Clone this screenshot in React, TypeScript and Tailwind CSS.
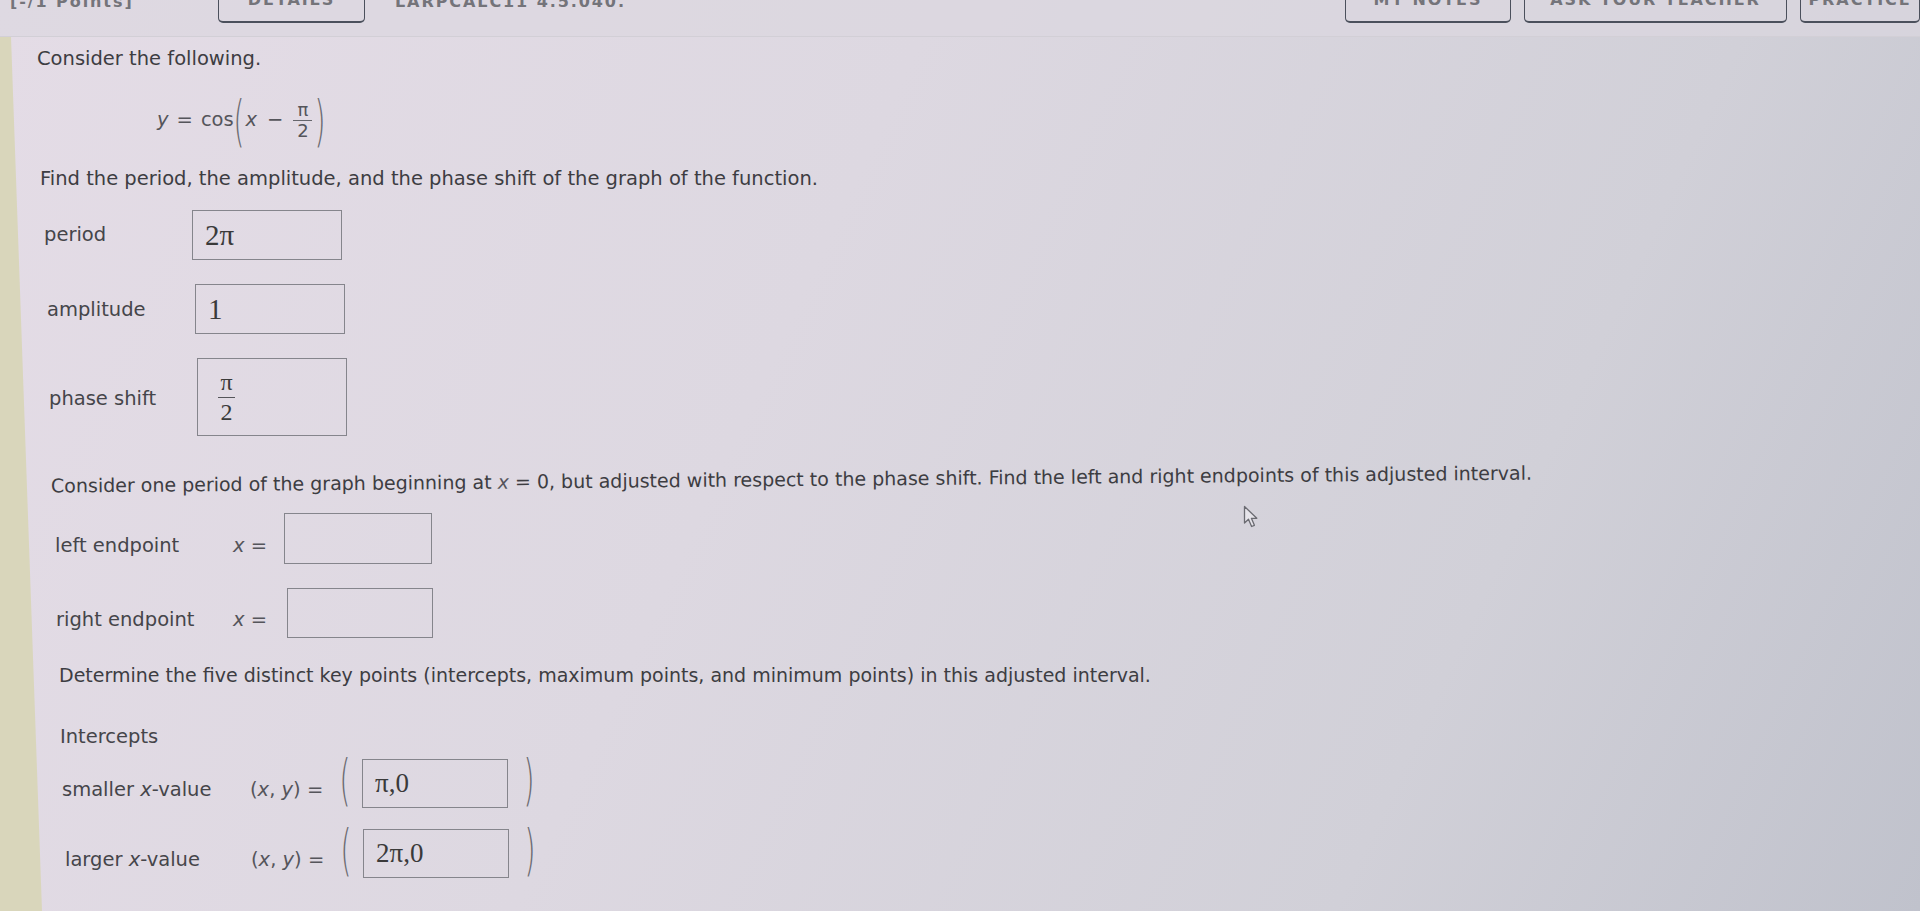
import React from 'react';

const sans = "font-['DejaVu_Sans','Verdana',sans-serif]";
const serif = "font-['Liberation_Serif','Times_New_Roman',serif]";

const AnswerBox: React.FC<{ w?: string; h?: string; children?: React.ReactNode }> = ({ w = 'w-[150px]', h = 'h-[50px]', children }) => (
  <div className={`${w} ${h} shrink-0 border border-[#85858c] flex items-center pl-[12px] text-[#3a3a3a] ${serif}`}>{children}</div>
);

const Paren: React.FC<{ side: 'l' | 'r'; cls?: string }> = ({ side, cls = '' }) => (
  <span className={`text-[56px] leading-none font-extralight text-[#6a6a70] scale-x-[0.5] inline-block -mt-[6px] ${sans} ${cls}`}>{side === 'l' ? '(' : ')'}</span>
);

const TopTab: React.FC<{ w: string; label: string }> = ({ w, label }) => (
  <div className={`${w} h-[44px] -mt-[21px] shrink-0 rounded-b-[5px] border-x-[1.5px] border-b-[2px] border-[#4b505c] flex items-center justify-center text-[16px] font-bold tracking-[0.12em] text-[#74747a]`}>
    {label}
  </div>
);

export default function App() {
  return (
    <div className={`w-[1920px] h-[911px] overflow-hidden ${sans} bg-[linear-gradient(115deg,#e4dce6_0%,#ddd8e1_40%,#d1d0d8_75%,#c0c2cc_100%)]`}>
      {/* header strip */}
      <div className="h-[37px] flex items-start overflow-hidden bg-[#dcd7df]/70 border-b border-[#d2cfd6]">
        <div className="w-[218px] shrink-0 pl-[10px] -mt-[10px] text-[16px] font-bold tracking-[0.12em] text-[#74747a]">[-/1 Points]</div>
        <TopTab w="w-[147px]" label="DETAILS" />
        <div className="ml-[30px] -mt-[10px] text-[16px] font-bold tracking-[0.12em] text-[#74747a]">LARPCALC11 4.5.040.</div>
        <div className="ml-auto flex gap-[13px]">
          <TopTab w="w-[166px]" label="MY NOTES" />
          <TopTab w="w-[263px]" label="ASK YOUR TEACHER" />
          <TopTab w="w-[120px]" label="PRACTICE" />
        </div>
      </div>

      {/* question body */}
      <div className="relative h-[874px]">
        <div className="absolute left-0 top-0 h-full w-[44px] bg-[#d9d6bb] [clip-path:polygon(0_0,11px_0,42px_100%,0_100%)]" />

        <div className="relative flex flex-col text-[19.5px] leading-[20px] text-[#3d3d42]">
          <div className="mt-[12px] pl-[37px]">Consider the following.</div>

          <div className="mt-[28px] pl-[157px] h-[46px] flex items-center text-[#55555b]">
            <span className="italic">y</span>
            <span className="mx-[8px]">=</span>
            <span>cos</span>
            <Paren side="l" cls="-ml-[6px] -mr-[4px] text-[50px] mt-[2px]" />
            <span className="italic">x</span>
            <span className="mx-[10px]">−</span>
            <span className={`inline-flex flex-col items-center text-[18px] leading-[20px] ${sans}`}>
              <span>π</span>
              <span className="w-[19px] border-t border-[#66666c]" />
              <span>2</span>
            </span>
            <Paren side="r" cls="-ml-[3px] text-[50px] mt-[2px]" />
          </div>

          <div className="mt-[26px] pl-[40px]">Find the period, the amplitude, and the phase shift of the graph of the function.</div>

          <div className="mt-[21px] pl-[44px] flex items-center">
            <span className="w-[148px] text-[#45454a]">period</span>
            <AnswerBox><span className="text-[29px]">2π</span></AnswerBox>
          </div>

          <div className="mt-[24px] pl-[47px] flex items-center">
            <span className="w-[148px] text-[#45454a] mt-[2px]">amplitude</span>
            <AnswerBox><span className="text-[29px]">1</span></AnswerBox>
          </div>

          <div className="mt-[24px] pl-[49px] flex items-center">
            <span className="w-[148px] text-[#45454a] mt-[4px]">phase shift</span>
            <AnswerBox h="h-[78px]">
              <span className="ml-[8px] inline-flex flex-col items-center text-[24px] leading-[25px]">
                <span>π</span>
                <span className="w-[17px] border-t border-[#55555a] my-[2px]" />
                <span>2</span>
              </span>
            </AnswerBox>
          </div>

          <div className="mt-[40px] pl-[51px] text-[19px] -rotate-[0.5deg] origin-left">
            Consider one period of the graph beginning at <span className="italic text-[#55555b]">x</span> = 0, but adjusted with respect to the phase shift. Find the left and right endpoints of this adjusted interval.
          </div>

          <div className="mt-[17px] pl-[55px] flex items-center">
            <span className="w-[178px] text-[#45454a] mt-[14px]">left endpoint</span>
            <span className="w-[51px] text-[#55555b] mt-[14px]"><span className="italic">x</span> =</span>
            <AnswerBox w="w-[148px]" h="h-[51px]" />
          </div>

          <div className="mt-[24px] pl-[56px] flex items-center">
            <span className="w-[177px] text-[#45454a] mt-[14px]">right endpoint</span>
            <span className="w-[54px] text-[#55555b] mt-[14px]"><span className="italic">x</span> =</span>
            <AnswerBox w="w-[146px]" />
          </div>

          <div className="mt-[27px] pl-[59px] text-[19px]">
            Determine the five distinct key points (intercepts, maximum points, and minimum points) in this adjusted interval.
          </div>

          <div className="mt-[42px] pl-[60px] text-[#45454a]">Intercepts</div>

          <div className="mt-[11px] pl-[62px] flex items-center">
            <span className="w-[188px] text-[#45454a] mt-[14px]">smaller <span className="italic">x</span>-value</span>
            <span className="w-[90px] text-[#55555b] mt-[14px]">(<span className="italic">x</span>, <span className="italic">y</span>) =</span>
            <span className="w-[28px] -ml-[6px]"><Paren side="l" /></span>
            <AnswerBox w="w-[146px]" h="h-[49px]"><span className="text-[27px]">π,0</span></AnswerBox>
            <span className="ml-[10px]"><Paren side="r" /></span>
          </div>

          <div className="mt-[20px] pl-[65px] flex items-center">
            <span className="w-[186px] text-[#45454a] mt-[14px]">larger <span className="italic">x</span>-value</span>
            <span className="w-[90px] text-[#55555b] mt-[14px]">(<span className="italic">x</span>, <span className="italic">y</span>) =</span>
            <span className="w-[28px] -ml-[6px]"><Paren side="l" /></span>
            <AnswerBox w="w-[146px]" h="h-[49px]"><span className="text-[27px]">2π,0</span></AnswerBox>
            <span className="ml-[10px]"><Paren side="r" /></span>
          </div>
        </div>

        {/* mouse pointer */}
        <svg className="absolute left-[1243px] top-[468px]" width="17" height="24" viewBox="0 0 17 24">
          <path d="M1.5 1.5 L1.5 18 L5.5 14.3 L8.6 21.5 L11.4 20.3 L8.4 13.3 L13.8 13.3 Z" fill="#e6e4ea" stroke="#6b6b72" strokeWidth="1.3" strokeLinejoin="round" />
        </svg>
      </div>
    </div>
  );
}
